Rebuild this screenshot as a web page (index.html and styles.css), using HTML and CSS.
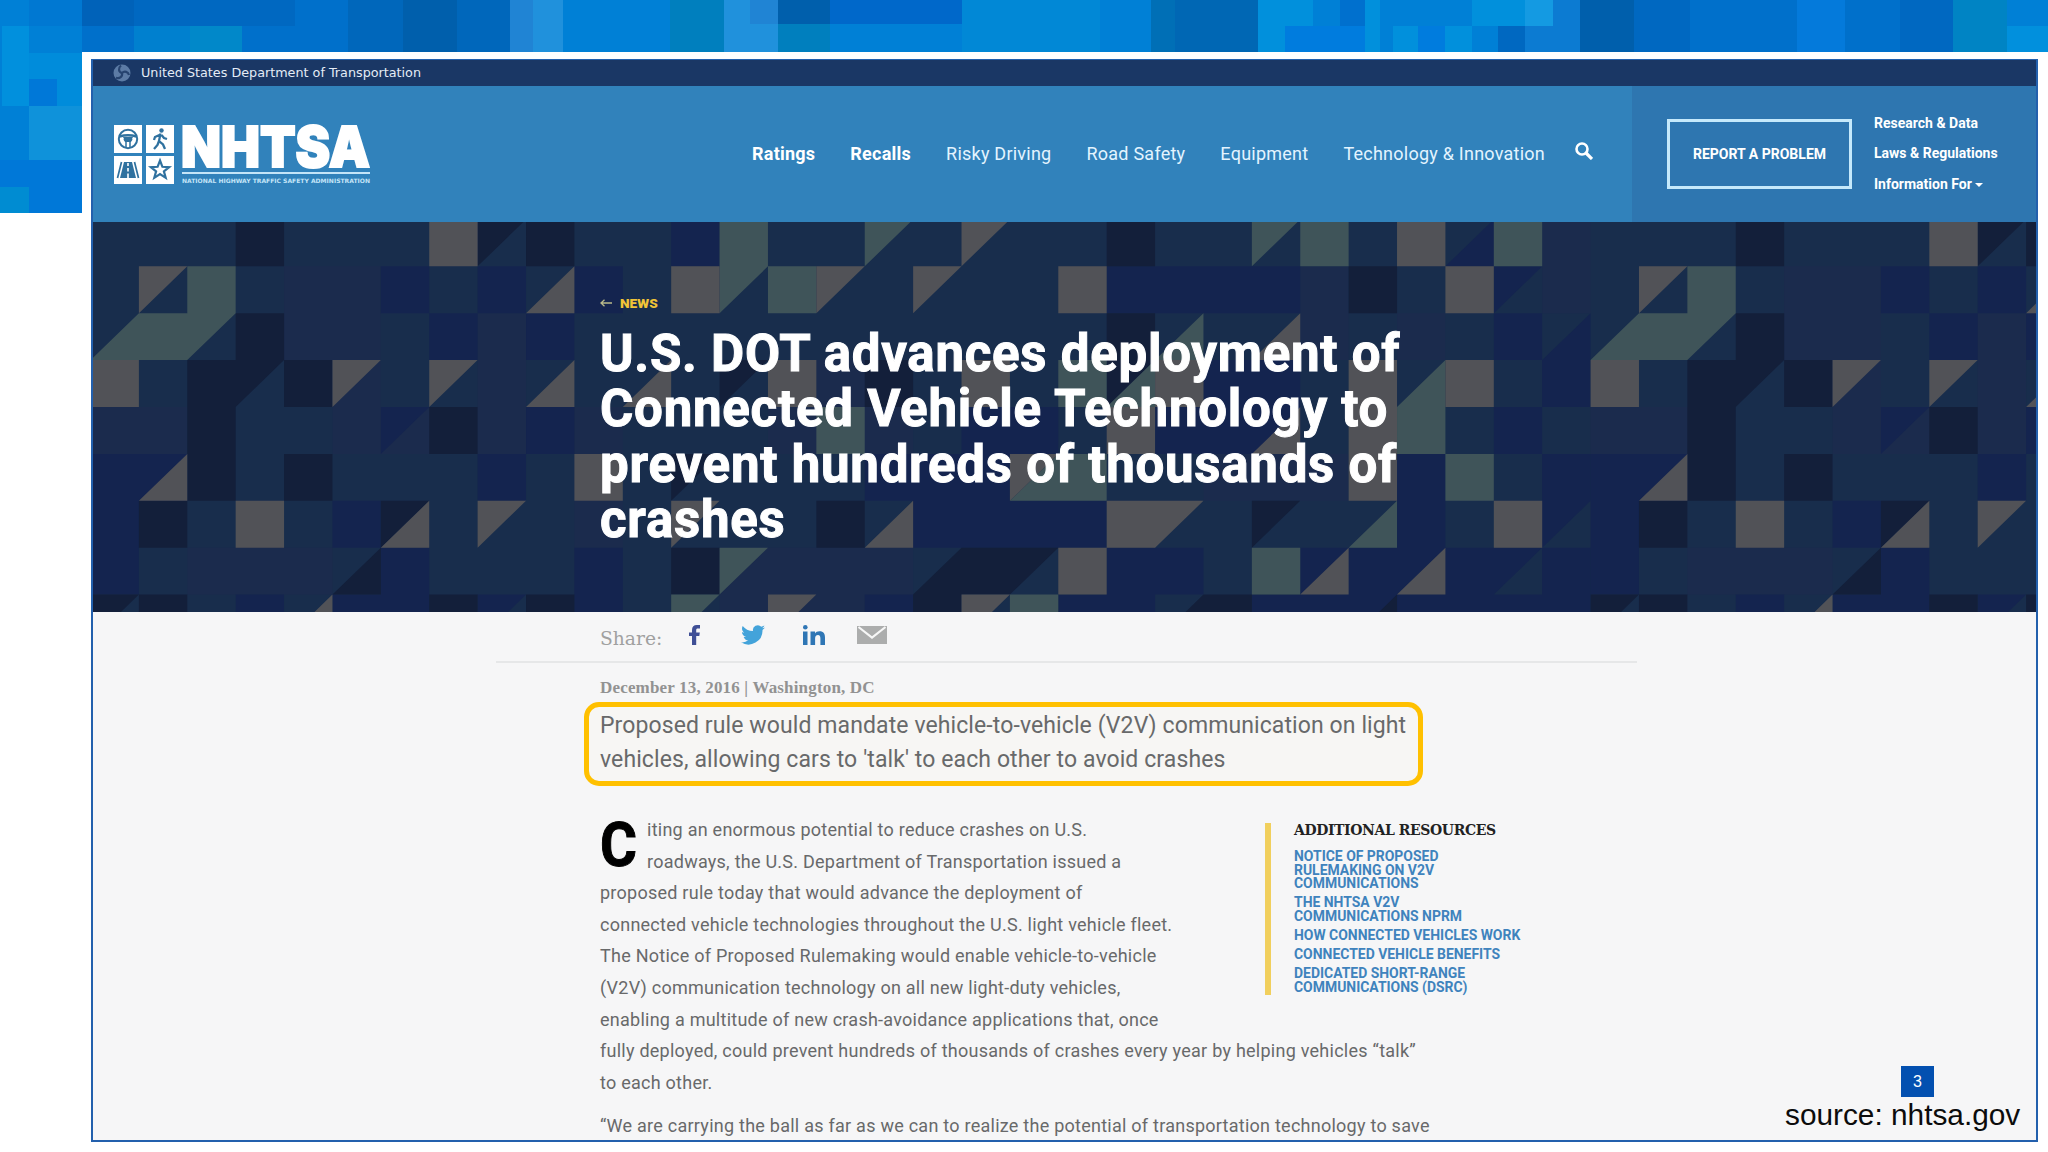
FILE: index.html
```html
<!DOCTYPE html>
<html lang="en">
<head>
<meta charset="utf-8">
<title>U.S. DOT advances deployment of Connected Vehicle Technology</title>
<link rel="stylesheet" href="styles.css">
</head>
<body>
<svg class="backdrop" width="2048" height="213" viewBox="0 0 2048 213" shape-rendering="crispEdges" aria-hidden="true">
  <path fill="#0080d6" d="M0 0h2048v53H0zM0 53h82v160H0z"/>
  <path fill="#0078d2" d="M29 0h53v26H29z"/>
  <path fill="#0062b9" d="M82 0h52v26H82z"/>
  <path fill="#0068c1" d="M134 0h161v53H134zM1634 0h56v53h-56zM1900 0h53v53h-53zM1498 26h27v27h-27z"/>
  <path fill="#0070cb" d="M82 26h52v27H82zM242 26h53v27h-53zM295 0h53v53h-53zM1690 0h107v53h-107zM1845 0h55v53h-55z"/>
  <path fill="#0080cf" d="M134 26h56v27h-56z"/>
  <path fill="#0188c9" d="M190 26h52v27h-52z"/>
  <path fill="#0067bb" d="M348 0h55v53h-55zM457 0h53v53h-53z"/>
  <path fill="#005fac" d="M403 0h54v53h-54zM778 0h52v24h-52zM1580 0h54v53h-54z"/>
  <path fill="#2084d4" d="M510 0h23v53h-23zM750 0h28v24h-28z"/>
  <path fill="#2091dc" d="M533 0h30v53h-30zM724 0h26v53h-26zM750 24h28v29h-28z"/>
  <path fill="#007fbe" d="M670 0h54v53h-54zM778 24h52v29h-52z"/>
  <path fill="#0068ca" d="M830 0h132v24H830z"/>
  <path fill="#0188d6" d="M962 0h138v53H962z"/>
  <path fill="#006fb6" d="M1151 0h24v53h-24z"/>
  <path fill="#0067b4" d="M1175 0h83v53h-83z"/>
  <path fill="#0190dc" d="M1258 0h55v53h-55zM1365 0h15v53h-15zM1393 26h25v27h-25zM1445 26h27v27h-27zM1472 0h53v26h-53z"/>
  <path fill="#0070ce" d="M1340 0h25v26h-25z"/>
  <path fill="#007cde" d="M1285 26h80v27h-80zM1418 26h27v27h-27z"/>
  <path fill="#149ae2" d="M1525 0h28v26h-28z"/>
  <path fill="#0c7bd2" d="M1525 26h55v27h-55zM1553 0h27v26h-27z"/>
  <path fill="#047adb" d="M1797 0h48v53h-48z"/>
  <path fill="#0084c4" d="M1953 0h54v53h-54z"/>
  <path fill="#0190dd" d="M2007 26h41v27h-41zM2 26h27v80H2z"/>
  <path fill="#008cdb" d="M29 53h53v53H29z"/>
  <path fill="#0078d8" d="M29 79h28v27H29zM0 160h82v27H0zM29 187h53v26H29z"/>
  <path fill="#0f92da" d="M29 106h53v54H29z"/>
  <path fill="#008cd2" d="M0 187h29v26H0z"/>
</svg>

<main class="frame">
  <div class="page">
    <div class="topbar">
      <svg class="seal" viewBox="0 0 18 18" aria-hidden="true">
        <circle cx="9" cy="9" r="8.500" fill="#5c7ba5"/>
        <path d="M9 9C5.500 8 5 4 8 1.500M9 9c.8 3.600-2.300 6-6 4.800M9 9c2.600-2.500 6.200-1.200 7 2" fill="none" stroke="#26436f" stroke-width="2.200"/>
      </svg>
      <span>United States Department of Transportation</span>
    </div>

    <header class="header">
      <svg class="logo" viewBox="0 0 258 62" width="258" height="62" role="img" aria-label="NHTSA">
        <path fill="#fff" d="M0 0h28v28H0zM32 0h28v28H32zM0 31h28v28H0zM32 31h28v28H32z"/>
        <g fill="none" stroke="#2f719f" stroke-width="2">
          <circle cx="14" cy="14" r="9.200"/>
          <path d="M5.500 11.500q8.500-2.500 17 0" stroke-width="2.500"/>
          <path d="M10 14l2 3v5M18 14l-2 3v5" stroke-width="1.500"/>
        </g>
        <path fill="#2f719f" d="M9 12h10l-2.500 5h-5z"/>
        <circle cx="47.500" cy="5.500" r="2.200" fill="#2f719f"/>
        <path d="M46.500 8.500L45 16l4 3.500 2 4.500M45 16l-1.500 4-3.500 4M46.500 9.500L41 12l-1 3M47.500 10l2.500 3 3 1" fill="none" stroke="#2f719f" stroke-width="2.300"/>
        <path d="M7.500 37l-4 16M20.500 37l4 16" fill="none" stroke="#2f719f" stroke-width="1.700"/>
        <path fill="#2f719f" d="M10 37h8l4 16H6z"/>
        <path d="M14 38v3M14 43v3.500M14 48.500V53" stroke="#fff" stroke-width="1.600"/>
        <path d="M46 35.500l2.400 6.300 6.700.3-5.200 4.200 1.800 6.500-5.700-3.700-5.700 3.700 1.800-6.500-5.200-4.200 6.700-.3z" fill="none" stroke="#2f719f" stroke-width="2.200"/>
        <text class="logo-name" x="67" y="41.500" textLength="189" lengthAdjust="spacingAndGlyphs">NHTSA</text>
        <path d="M68 48h188" stroke="#c4e5f8" stroke-width="2"/>
        <text class="logo-tag" x="68" y="58" textLength="188" lengthAdjust="spacingAndGlyphs">NATIONAL HIGHWAY TRAFFIC SAFETY ADMINISTRATION</text>
      </svg>
      <nav class="nav">
        <b>Ratings</b><b>Recalls</b><span>Risky Driving</span><span>Road Safety</span><span>Equipment</span><span>Technology &amp; Innovation</span>
        <svg class="search" viewBox="0 0 18 18" aria-hidden="true"><circle cx="7" cy="7" r="5.500" fill="none" stroke="#fff" stroke-width="2.600"/><path d="M11 11l6 6" stroke="#fff" stroke-width="3.200"/></svg>
      </nav>
      <div class="utility">
        <div class="report">REPORT A PROBLEM</div>
        <div class="links"><span>Research &amp; Data</span><span>Laws &amp; Regulations</span><span>Information For <i class="caret"></i></span></div>
      </div>
    </header>

    <section class="hero">
      <svg class="mosaic" viewBox="0 0 1945 390" width="1945" height="390" preserveAspectRatio="none" aria-hidden="true">
        <defs>
          <g id="tile">
            <path fill="#1b2b4d" d="M4 1h2v3h3v1h-4v-1h-1zM8 2h1v3h-1zM0 4h2v1h-2zM2 7h3v1h-3zM13 7h4v2h-4zM25 1h1v2h-1zM30 0h1v2h-1zM10 4h1v3h-1zM14 3h3v2h-3zM23 5h3v1h-3zM27 2h1v1h-1z"/>
            <path fill="#14244f" d="M12 0h1v1h-1zM29 0v1h-1zM6 1h1v1h-1zM8 1h1v1h-1zM10 1h1v1h-1zM21 1h4v1h-4zM29 1h1l-1 1zM7 2h1v1h-1zM9 2h1v1h-1zM29 2h1v1h-1zM31 2v1h-1zM23 3h2v1h-2zM30 3h1v1h-1zM6 4h1l-1 1zM9 4h1v1h-1zM18 4h2v1h-2zM22 4h3v1h-3zM29 4h1v1h-1zM0 5h2v1h-2zM8 5h1v1h-1zM16 5h3v1h-3zM27 5h1v1h-1zM30 5h1v1h-1zM0 6h1v2h-1zM5 6h1v1h-1zM17 6h4v1h-4zM27 6h1v1h-1zM30 6h1l-1 1zM6 7h1v1h-1zM10 7h1v2h-1zM21 7h2v1h-2zM25 7h4v1h-4zM29 7h1l-1 1zM30 7h1v1h-1zM3 8h1v1h-1zM5 8h2v1h-2zM8 8h1l-1 1zM16 8h1v1h-1zM20 8h2v1h-2zM24 8h7v1h-7z"/>
            <path fill="#131f3a" d="M3 0h1v1h-1zM8 0h1l-1 1zM9 0h1v1h-1zM21 0h1v1h-1zM26 1h1v1h-1zM3 2h1v1h-1zM21 2h1v1h-1zM2 3h1v3h-1zM3 3h1l-1 1zM4 3h1v1h-1zM13 3h1l-1 1zM16 3h1v1h-1zM21 3h1l-1 1zM7 4h1v1h-1zM4 5h1v1h-1zM12 5h1l-1 1zM1 6h1v1h-1zM6 6h1l-1 1zM15 6h1v1h-1zM24 6h1l-1 1zM6 7v1h-1zM12 7h1v1h-1zM18 7v1h-1zM18 7h1v1h-1zM19 7h1l-1 1zM0 8h1l-1 1zM1 8h1v1h-1zM7 8h1v1h-1zM9 8h1v1h-1zM17 8h1v1h-1zM23 8v1h-1zM23 8h1v1h-1zM27 8v1h-1z"/>
            <path fill="#3f5459" d="M13 0h1v1h-1zM16 0h1l-1 1zM24 0h1l-1 1zM25 0h1v1h-1zM29 0h1v1h-1zM2 1h1v1h-1zM13 1h1l-1 1zM14 1h1v1h-1zM1 2v1h-1zM1 2h1v1h-1zM2 2h1l-1 1zM23 2v1h-1zM20 3h1v1h-1zM22 3v1h-1zM28 3v1h-1zM15 4h1v1h-1zM27 4h1v1h-1zM20 5v1h-1zM20 5h1v1h-1zM28 5h1v1h-1zM27 6v1h-1zM13 7h1l-1 1zM24 7h1v1h-1zM12 8h1l-1 1zM19 8h1v1h-1z"/>
            <path fill="#515257" d="M7 0h1v1h-1zM18 0h1l-1 1zM27 0h1v1h-1zM1 1h1l-1 1zM10 1v1h-1zM12 1h1v1h-1zM15 1h1l-1 1zM17 1h1l-1 1zM20 1h1v1h-1zM28 1h1v1h-1zM25 2v1h-1zM0 3h1v1h-1zM5 3h1l-1 1zM7 3h1l-1 1zM10 3v1h-1zM12 3v1h-1zM14 3h1v1h-1zM18 3h1v1h-1zM22 3h1v1h-1zM26 3h1v3h-1zM28 3h1v1h-1zM21 4h1v1h-1zM25 4v1h-1zM2 5v1h-1zM10 5h1v1h-1zM19 5h1l-1 1zM3 6h1v1h-1zM7 6v1h-1zM8 6h1l-1 1zM12 6h1l-1 1zM17 6v1h-1zM21 6h1v1h-1zM22 6h1l-1 1zM29 6h1v1h-1zM20 7h1v1h-1zM26 7v1h-1zM28 7v1h-1zM5 8v1h-1zM14 8h1l-1 1zM18 8h1l-1 1z"/>
          </g>
        </defs>
        <rect width="1945" height="390" fill="#182d4c"/>
        <g transform="translate(-2.500 -2.600) scale(48.390 46.900)"><use href="#tile"/><use href="#tile" x="31"/></g>
      </svg>
      <div class="hero-text">
        <div class="crumb"><svg viewBox="0 0 12 8" aria-hidden="true"><path d="M12 4H1M4.500.8L1 4l3.500 3.200" fill="none" stroke="#b9b98a" stroke-width="1.300"/></svg>NEWS</div>
        <h1>U.S. DOT advances deployment of<br>Connected Vehicle Technology to<br>prevent hundreds of thousands of<br>crashes</h1>
      </div>
    </section>

    <div class="share">
      <span class="share-label">Share:</span>
      <svg class="fb" viewBox="0 0 11 20"><path fill="#3f4f96" d="M3 20v-9H0V7.500h3V5c0-3.300 1.800-5 4.800-5H11v3.600H9C7.500 3.600 7.200 4.200 7.200 5.300v2.200h3.600L10.300 11H7.200v9z"/></svg>
      <svg class="tw" viewBox="0 0 24 20"><path fill="#43a3da" d="M24 2.400c-.9.400-1.800.7-2.800.8 1-.6 1.800-1.600 2.200-2.700-1 .6-2 1-3.100 1.200A4.900 4.900 0 0 0 12 6.100C7.700 5.900 4.100 3.900 1.700.9c-1.300 2.200-.7 5.100 1.500 6.600-.8 0-1.600-.2-2.200-.6 0 2.300 1.600 4.400 3.900 4.900-.7.200-1.500.2-2.200.1.600 2 2.400 3.400 4.600 3.400A9.900 9.900 0 0 1 0 17.300a14 14 0 0 0 21.500-12.400c1-.7 1.800-1.500 2.500-2.500z"/></svg>
      <svg class="li" viewBox="0 0 22 20"><path fill="#2f76b5" d="M0 6.500h4.500V20H0zM7.500 6.500H12v1.900c.8-1.400 2.400-2.200 4.400-2.200 4.300 0 5.600 2.500 5.600 6.600V20h-4.600v-6.500c0-2.300-.6-3.500-2.400-3.500-2 0-2.900 1.400-2.900 3.600V20H7.500z"/><circle cx="2.300" cy="2.300" r="2.300" fill="#2f76b5"/></svg>
      <svg class="mail" viewBox="0 0 30 18"><path fill="#acadad" d="M0 0h30v18H0z"/><path d="M1.500 1L15 11.500 28.500 1" fill="none" stroke="#f7f7f7" stroke-width="2.200"/></svg>
    </div>

    <article class="article">
      <div class="date">December 13, 2016 | Washington, DC</div>
      <div class="callout">Proposed rule would mandate vehicle-to-vehicle (V2V) communication on light<br>vehicles, allowing cars to 'talk' to each other to avoid crashes</div>
      <div class="story">
        <aside class="resources">
          <h2>ADDITIONAL RESOURCES</h2>
          <p>NOTICE OF PROPOSED<br>RULEMAKING ON V2V<br>COMMUNICATIONS</p>
          <p>THE NHTSA V2V<br>COMMUNICATIONS NPRM</p>
          <p>HOW CONNECTED VEHICLES WORK</p>
          <p>CONNECTED VEHICLE BENEFITS</p>
          <p>DEDICATED SHORT-RANGE<br>COMMUNICATIONS (DSRC)</p>
        </aside>
        <p class="para"><span class="dropcap">C</span>iting an enormous potential to reduce crashes on U.S.<br>roadways, the U.S. Department of Transportation issued a<br>proposed rule today that would advance the deployment of<br>connected vehicle technologies throughout the U.S. light vehicle fleet.<br>The Notice of Proposed Rulemaking would enable vehicle-to-vehicle<br>(V2V) communication technology on all new light-duty vehicles,<br>enabling a multitude of new crash-avoidance applications that, once<br>fully deployed, could prevent hundreds of thousands of crashes every year by helping vehicles “talk”<br>to each other.</p>
        <p class="para">“We are carrying the ball as far as we can to realize the potential of transportation technology to save</p>
      </div>
    </article>
  </div>
</main>
<div class="page-number">3</div>
<div class="source">source: nhtsa.gov</div>
</body>
</html>
```
FILE: styles.css
```css
* { box-sizing: border-box; }
body {
  margin: 0;
  width: 2048px;
  height: 1152px;
  overflow: hidden;
  position: relative;
  background: #fff;
  font-family: Roboto, "Liberation Sans", sans-serif;
}
svg { display: block; flex: none; }
h1, h2, p { margin: 0; }

.backdrop { position: absolute; top: 0; left: 0; z-index: -1; }

/* white slide area holding the captured page */
.frame {
  margin: 52px 0 0 82px;
  height: 1100px;
  padding: 7px 10px 10px 9px;
  background: #fff;
  display: flow-root;
}
.page {
  height: 1083px;
  overflow: hidden;
  border: 2px solid #2360ad;
  border-top-width: 1px;
  background: #f6f6f7;
}

.topbar {
  height: 26px;
  display: flex;
  align-items: center;
  padding: 0 0 1px 20px;
  gap: 10px;
  background: #1a3765;
  color: #e4ecf6;
  font: 500 12.750px "DejaVu Sans", sans-serif;
}
.seal { width: 18px; height: 18px; }

.header { height: 136px; display: flex; background: #3182bb; color: #fff; }
.logo { margin: 39px 0 0 21px; overflow: visible; }
.logo-name { font: 900 57px Inter, sans-serif; fill: #fff; stroke: #fff; stroke-width: 2; }
.logo-tag { font: 700 6px "DejaVu Sans", sans-serif; fill: #c4e5f8; }
.nav {
  display: flex;
  align-items: center;
  gap: 35px;
  margin-left: 380px;
  padding-bottom: 2px;
  font-size: 18px;
  letter-spacing: .24px;
  white-space: nowrap;
}
.nav span { color: #e3f4ff; }
.search { width: 18px; height: 18px; margin: 0 0 5px -5px; }
.utility {
  width: 404px;
  margin-left: auto;
  padding: 0 0 1px 35px;
  display: flex;
  align-items: center;
  background: #2e76b0;
  white-space: nowrap;
}
.report {
  width: 185px;
  height: 70px;
  border: 3px solid #c5e9fb;
  display: grid;
  place-items: center;
  font-size: 14px;
  font-weight: 700;
}
.links {
  margin-left: 22px;
  display: grid;
  font-size: 14px;
  font-weight: 700;
  line-height: 30.500px;
}
.caret {
  display: inline-block;
  border: 4px solid transparent;
  border-top-color: #fff;
  border-bottom: 0;
  vertical-align: 2px;
}

.hero { display: grid; height: 390px; }
.mosaic, .hero-text { grid-area: 1 / 1; }
.hero-text { z-index: 1; padding: 73px 0 0 507px; }
.crumb {
  display: flex;
  align-items: center;
  gap: 8px;
  height: 16px;
  color: #f0c337;
  font-size: 13.700px;
  font-weight: 900;
}
.crumb svg { width: 12px; height: 8px; }
h1 {
  margin-top: 15px;
  color: #fff;
  font-size: 51px;
  line-height: 55.300px;
  font-weight: 700;
  letter-spacing: .75px;
  -webkit-text-stroke: 1px #fff;
  white-space: nowrap;
}

.share {
  display: flex;
  width: 1141px;
  height: 51px;
  margin-left: 403px;
  padding: 13px 0 0 104px;
  border-bottom: 2px solid #e6e7e8;
}
.share-label {
  width: 89px;
  padding-top: 2px;
  color: #a0a0a0;
  font: 18.700px/24px "DejaVu Serif", serif;
}
.fb { width: 11px; height: 20px; }
.tw { width: 24px; height: 20px; margin-left: 41px; }
.li { width: 22px; height: 20px; margin-left: 38px; }
.mail { width: 30px; height: 18px; margin: 1px 0 0 32px; }

.article { padding-left: 507px; color: #68696a; }
.date {
  height: 39px;
  padding-top: 15px;
  color: #929292;
  font: 700 17px/20px "Liberation Serif", serif;
  letter-spacing: .17px;
  white-space: nowrap;
}
.callout {
  width: 839px;
  height: 84px;
  margin-left: -16px;
  padding: 2px 0 0 11px;
  border: 5px solid #ffc000;
  border-radius: 15px;
  background: #f7f6f4;
  font-size: 23px;
  letter-spacing: .1px;
  line-height: 34px;
  white-space: nowrap;
}
.story { padding-top: 28px; white-space: nowrap; }
.resources {
  float: right;
  margin: 9px 515px 0 0;
  width: 256px;
  height: 172px;
  padding-left: 23px;
  border-left: 6px solid #f1cf5d;
  color: #3f83bd;
}
.resources h2 {
  margin-bottom: 12px;
  color: #222;
  font: 700 14px/15px "DejaVu Serif", serif;
  letter-spacing: -.4px;
}
.resources p {
  margin-bottom: 5.300px;
  font-size: 13.950px;
  font-weight: 700;
  line-height: 13.700px;
}
.para { margin-bottom: 12px; font-size: 18px; letter-spacing: .25px; line-height: 31.600px; }
.dropcap {
  float: left;
  width: 47px;
  height: 60px;
  color: #000;
  font-size: 62px;
  line-height: 62px;
  font-weight: 700;
  -webkit-text-stroke: 1px #000;
  transform: scaleX(.91);
  transform-origin: left;
}

/* slide annotations */
.page-number {
  position: absolute;
  left: 1901px;
  top: 1066px;
  width: 33px;
  height: 31px;
  background: #0350b0;
  color: #fff;
  font: 16px/32px "Liberation Sans", sans-serif;
  text-align: center;
}
.source {
  position: absolute;
  left: 1785px;
  top: 1098px;
  color: #0c0c0c;
  font: 29.800px/34px "Liberation Sans", sans-serif;
  white-space: nowrap;
}
```
